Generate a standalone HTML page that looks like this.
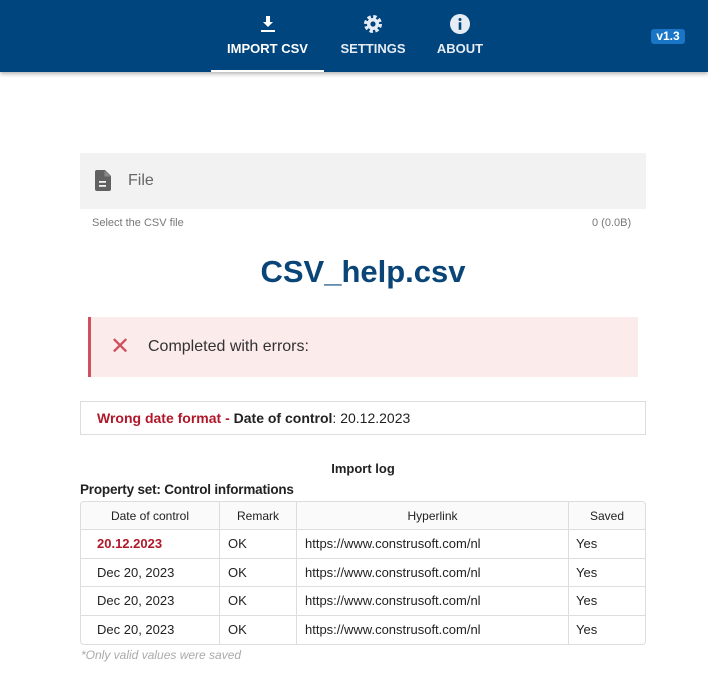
<!DOCTYPE html>
<html><head><meta charset="utf-8"><style>
*{margin:0;padding:0;box-sizing:border-box}
body{width:708px;height:680px;background:#fff;font-family:"Liberation Sans",Arial,sans-serif;position:relative;overflow:hidden;color:#222}
.hdr{position:absolute;left:0;top:0;width:708px;height:72px;background:#00457e;box-shadow:0 2px 4px rgba(0,0,0,.3)}
.tab{position:absolute;top:0;height:72px;color:#fff;font-weight:bold;font-size:13px;text-align:center}
.tab span{position:absolute;top:41px;left:0;right:0}
.tab svg{position:absolute;top:14px;left:50%;margin-left:-10px}
.ul{position:absolute;left:211px;top:70px;width:113px;height:2px;background:#fff}
.ver{position:absolute;left:651px;top:29px;width:34px;height:15px;background:#1976c6;color:#fff;font-size:12px;font-weight:bold;border-radius:3px;text-align:center;line-height:15px}
.abs{position:absolute}
table{border-collapse:separate;border-spacing:0;font-size:13px}
td{line-height:15px}
</style></head><body>
<div class="hdr">
<div class="tab" style="left:211px;width:113px"><svg width="20" height="20" viewBox="0 0 20 20"><path d="M8 2h4v6h3l-5 5-5-5h3z" fill="#fff"/><rect x="3" y="16" width="14" height="2" fill="#fff"/></svg><span>IMPORT CSV</span></div>
<div class="tab" style="left:330px;width:86px;color:#e6ecf3"><svg width="20" height="20" viewBox="0 0 20 20"><circle cx="10" cy="10" r="6.5" fill="none" stroke="#e6ecf3" stroke-width="5" stroke-dasharray="3 2.1"/><circle cx="10" cy="10" r="6" fill="#e6ecf3"/><circle cx="10" cy="10" r="2.6" fill="#00457e"/></svg><span>SETTINGS</span></div>
<div class="tab" style="left:425px;width:70px;color:#e6ecf3"><svg width="20" height="20" viewBox="0 0 20 20"><circle cx="10" cy="10" r="10" fill="#e6ecf3"/><circle cx="10" cy="5.5" r="1.5" fill="#00457e"/><rect x="8.7" y="8.3" width="2.6" height="7.5" fill="#00457e"/></svg><span>ABOUT</span></div>
<div class="ul"></div>
<div class="ver">v1.3</div>
</div>

<div class="abs" style="left:80px;top:153px;width:566px;height:56px;background:#f2f2f2"></div>
<svg class="abs" style="left:95px;top:170px" width="16" height="21" viewBox="0 0 16 21"><path d="M2 0h8l6 6v13a2 2 0 0 1-2 2H2a2 2 0 0 1-2-2V2a2 2 0 0 1 2-2z" fill="#616161"/><rect x="4" y="11" width="7" height="1.8" fill="#f2f2f2"/><rect x="4" y="15" width="7" height="1.8" fill="#f2f2f2"/><path d="M9.5 0.5v6h6" fill="#8a8a8a"/></svg>
<div class="abs" style="left:128px;top:172px;font-size:16px;color:#666">File</div>
<div class="abs" style="left:92px;top:217px;font-size:11px;color:#777">Select the CSV file</div>
<div class="abs" style="left:592px;top:217px;font-size:11px;color:#777">0 (0.0B)</div>
<div class="abs" style="left:0;width:726px;top:254px;text-align:center;font-size:31px;font-weight:bold;color:#0a4578">CSV_help.csv</div>

<div class="abs" style="left:88px;top:317px;width:550px;height:60px;background:#fcebeb;border-left:3px solid #d05060"></div>
<div class="abs" style="left:110px;top:334px;font-size:24px;color:#d0505e;line-height:26px">✕</div>
<div class="abs" style="left:148px;top:338px;font-size:16px;color:#333">Completed with errors:</div>

<div class="abs" style="left:80px;top:401px;width:566px;height:34px;border:1px solid #ddd"></div>
<div class="abs" style="left:97px;top:410px;font-size:14px"><b style="color:#b0182a">Wrong date format - </b><b>Date of control</b>: 20.12.2023</div>

<div class="abs" style="left:0;width:726px;top:461px;text-align:center;font-size:13px;font-weight:bold">Import log</div>
<div class="abs" style="left:80px;top:482px;font-size:13.5px;font-weight:bold;letter-spacing:-0.2px">Property set: Control informations</div>

<div class="abs" style="left:80px;top:501px;width:566px;height:144px;border:1px solid #ddd;border-radius:4px;overflow:hidden">
<table style="width:100%">
<tr style="background:#fafafa;height:28px;font-size:12px"><th style="width:139px;font-weight:normal;border-right:1px solid #ddd;border-bottom:1px solid #ddd">Date of control</th><th style="width:77px;font-weight:normal;border-right:1px solid #ddd;border-bottom:1px solid #ddd">Remark</th><th style="width:272px;font-weight:normal;border-right:1px solid #ddd;border-bottom:1px solid #ddd">Hyperlink</th><th style="font-weight:normal;border-bottom:1px solid #ddd">Saved</th></tr>
<tr style="height:28.5px"><td style="padding-left:16px;border-right:1px solid #ddd;border-bottom:1px solid #ddd;color:#b0182a;font-weight:bold">20.12.2023</td><td style="padding-left:8px;border-right:1px solid #ddd;border-bottom:1px solid #ddd">OK</td><td style="padding-left:8px;border-right:1px solid #ddd;border-bottom:1px solid #ddd">https://www.construsoft.com/nl</td><td style="padding-left:7px;border-bottom:1px solid #ddd">Yes</td></tr>
<tr style="height:28.5px"><td style="padding-left:16px;border-right:1px solid #ddd;border-bottom:1px solid #ddd">Dec 20, 2023</td><td style="padding-left:8px;border-right:1px solid #ddd;border-bottom:1px solid #ddd">OK</td><td style="padding-left:8px;border-right:1px solid #ddd;border-bottom:1px solid #ddd">https://www.construsoft.com/nl</td><td style="padding-left:7px;border-bottom:1px solid #ddd">Yes</td></tr>
<tr style="height:28.5px"><td style="padding-left:16px;border-right:1px solid #ddd;border-bottom:1px solid #ddd">Dec 20, 2023</td><td style="padding-left:8px;border-right:1px solid #ddd;border-bottom:1px solid #ddd">OK</td><td style="padding-left:8px;border-right:1px solid #ddd;border-bottom:1px solid #ddd">https://www.construsoft.com/nl</td><td style="padding-left:7px;border-bottom:1px solid #ddd">Yes</td></tr>
<tr style="height:28.5px"><td style="padding-left:16px;border-right:1px solid #ddd">Dec 20, 2023</td><td style="padding-left:8px;border-right:1px solid #ddd">OK</td><td style="padding-left:8px;border-right:1px solid #ddd">https://www.construsoft.com/nl</td><td style="padding-left:7px">Yes</td></tr>
</table></div>
<div class="abs" style="left:81px;top:648px;font-size:12px;font-style:italic;color:#aaa">*Only valid values were saved</div>
</body></html>
